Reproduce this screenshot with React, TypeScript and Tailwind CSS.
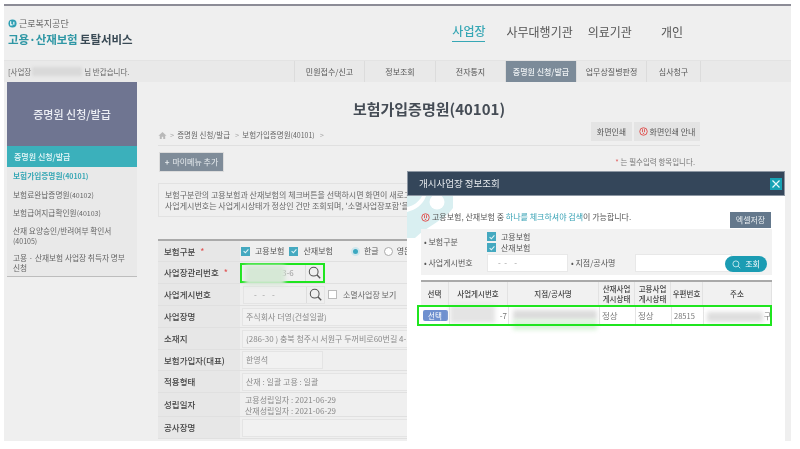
import React from "react";

function SearchIcon({ className = "" }: { className?: string }) {
  return (
    <svg viewBox="0 0 16 16" className={className} fill="none" stroke="#555" strokeWidth="1.3">
      <circle cx="7" cy="7" r="5.4" />
      <path d="M10.9 10.9 15 15" strokeWidth="1.7" />
    </svg>
  );
}

function AlertIcon({ className = "" }: { className?: string }) {
  return (
    <svg viewBox="0 0 12 12" className={className} fill="none">
      <circle cx="6" cy="6" r="5" stroke="#e0514f" strokeWidth="1.3" />
      <rect x="4.1" y="2.9" width="1.2" height="4" fill="#e0514f" />
      <rect x="6.7" y="2.9" width="1.2" height="4" fill="#e0514f" />
      <rect x="5.2" y="7.8" width="1.6" height="1.4" fill="#e0514f" />
    </svg>
  );
}

function Check({ className = "" }: { className?: string }) {
  return (
    <span className={`flex h-[9px] w-[9px] shrink-0 items-center justify-center bg-[#45a9c0] ${className}`}>
      <svg viewBox="0 0 10 10" className="h-[8px] w-[8px]" fill="none" stroke="#dff3f6" strokeWidth="1.4">
        <path d="M2 5.2 4.2 7.2 8 3" />
      </svg>
    </span>
  );
}

const tabs = [
  { t: "민원접수/신고", w: "w-[70px]" },
  { t: "정보조회", w: "w-[71px]" },
  { t: "전자통지", w: "w-[70px]" },
  { t: "증명원 신청/발급", w: "w-[71px]", active: true },
  { t: "업무상질병판정", w: "w-[70px]" },
  { t: "심사청구", w: "w-[54px]" },
];

function FormRow({ label, req, h, children }: { label: string; req?: boolean; h: string; children: React.ReactNode }) {
  return (
    <div className={`flex border-b border-[#e0e0e0] ${h}`}>
      <div className="flex w-[82px] shrink-0 items-center gap-[5px] bg-[#e7e7e7] pl-[6px] text-[8.5px] font-medium text-[#444]">
        <span>{label}</span>
        {req && <span className="text-[#e05a5a]">*</span>}
      </div>
      <div className="flex min-w-0 flex-1 items-center pl-[2px]">{children}</div>
    </div>
  );
}

function Val({ children, w = "w-full" }: { children?: React.ReactNode; w?: string }) {
  return (
    <div className={`flex h-[18px] items-center border border-[#e4e4e4] bg-[#f1f1f1] pl-[3px] text-[8px] text-[#8a8a8a] ${w}`}>
      {children}
    </div>
  );
}

const heads: { w: string; lines: string[] }[] = [
  { w: "w-[28px]", lines: ["선택"] },
  { w: "w-[59px]", lines: ["사업게시번호"] },
  { w: "w-[91px]", lines: ["지점/공사명"] },
  { w: "w-[36px]", lines: ["산재사업", "게시상태"] },
  { w: "w-[36px]", lines: ["고용사업", "게시상태"] },
  { w: "w-[32px]", lines: ["우편번호"] },
  { w: "w-[69px]", lines: ["주소"] },
];

function Code({ children }: { children: React.ReactNode }) {
  return <span className="text-[7px]">{children}</span>;
}

export default function App() {
  return (
    <div className="h-[449px] w-[800px] overflow-hidden bg-white pl-[4px] pt-[4px] font-['Noto_Sans_CJK_KR','Noto_Sans',sans-serif] blur-[0.45px]">
      <div className="relative h-[437px] w-[787px] overflow-hidden border-t-2 border-[#8c8c96] bg-[#efefef]">
        {/* header */}
        <div className="flex h-[54px] items-start justify-between">
          <div className="pl-[4px] pt-[12px]">
            <div className="flex items-center gap-[2px] text-[9px] leading-[11px] text-[#666]">
              <svg viewBox="0 0 10 10" className="h-[9px] w-[9px]">
                <circle cx="5" cy="5" r="4.5" fill="#2f9fb3" />
                <path d="M3 2.5v4h2M6.5 3v3.5" stroke="#fff" strokeWidth="1.2" fill="none" />
              </svg>
              근로복지공단
            </div>
            <div className="mt-[2px] text-[11.5px] font-bold leading-[16px] tracking-[-0.1px] text-[#3a4a55]">
              <span className="text-[#2f97a5]">고용·산재보험</span> 토탈서비스
            </div>
          </div>
          <div className="mr-[108px] mt-[16px] flex text-[12px] leading-[20px] text-[#555]">
            <span className="border-b border-[#37a7b5] font-medium leading-[18px] text-[#37a7b5]">사업장</span>
            <span className="ml-[21px] whitespace-nowrap">사무대행기관</span>
            <span className="ml-[15px] whitespace-nowrap">의료기관</span>
            <span className="ml-[29px] whitespace-nowrap">개인</span>
          </div>
        </div>

        {/* sub bar */}
        <div className="flex h-[22px] items-center border-t border-[#e3e3e3] bg-[#e9e9e9]">
          <div className="flex w-[290px] items-center pl-[4px] text-[7.5px] text-[#666]">
            <span>[사업장</span>
            <span className="mx-[1px] h-[9px] w-[50px] bg-[#d9d9d9] blur-[1.5px]" />
            <span className="ml-[1px]">님 반갑습니다.</span>
          </div>
          {tabs.map((x) => (
            <div
              key={x.t}
              className={`flex h-full items-center justify-center border-l border-[#dcdcdc] text-[8px] ${x.w} ${x.active ? "bg-[#7c8b99] font-medium text-[#eef2f4]" : "text-[#555]"}`}
            >
              {x.t}
            </div>
          ))}
          <div className="h-full border-l border-[#dcdcdc]" />
        </div>

        {/* body */}
        <div className="flex">
          <aside className="ml-[3px] h-[195px] w-[130px] border-b border-[#bdbdbd] bg-[#e9e9e9]">
            <div className="flex h-[64px] items-center justify-center bg-[#6f7591] text-[11px] font-medium text-[#eceef4]">
              증명원 신청/발급
            </div>
            <div className="flex h-[21px] items-center bg-[#3bb0bb] pl-[7px] text-[8px] font-medium text-[#eaf8f9]">
              증명원 신청/발급
            </div>
            <div className="px-[6px] text-[7.7px] leading-[10px] text-[#666]">
              <div className="flex h-[18px] items-baseline pt-[4px] font-bold text-[#37a7b5]">보험가입증명원<Code>(40101)</Code></div>
              <div className="flex h-[19px] items-baseline pt-[5px]">보험료완납증명원<Code>(40102)</Code></div>
              <div className="flex h-[18px] items-baseline pt-[4px]">보험급여지급확인원<Code>(40103)</Code></div>
              <div className="mt-[4px]">산재 요양승인/반려여부 확인서<br /><Code>(40105)</Code></div>
              <div className="mt-[7px]">고용 · 산재보험 사업장 취득자 명부<br />신청</div>
            </div>
          </aside>

          <main className="ml-[21px] w-[542px]">
            <h1 className="pt-[17px] text-center text-[15px] font-bold leading-[20px] text-[#454c55]">
              보험가입증명원(40101)
            </h1>
            <div className="mt-[3px] flex h-[24px] items-center justify-between border-b border-[#e0e0e0] pb-[4px]">
              <div className="flex items-center gap-[3px] pt-[7px] text-[7.5px] text-[#666]">
                <svg viewBox="0 0 10 10" className="h-[9px] w-[9px]"><path d="M5 1 .5 5.2H2V9h2.2V6.5h1.6V9H8V5.2h1.5z" fill="#b9b9b9" /></svg>
                <span className="text-[#aaa]">&gt;</span>
                <span>증명원 신청/발급</span>
                <span className="ml-[2px] text-[#aaa]">&gt;</span>
                <span>보험가입증명원<Code>(40101)</Code></span>
                <span className="ml-[2px] text-[#aaa]">&gt;</span>
              </div>
              <div className="flex gap-[2px] text-[8px] text-[#555]">
                <div className="flex h-[19px] w-[41px] items-center justify-center bg-[#e4e4e4]">화면인쇄</div>
                <div className="flex h-[19px] w-[66px] items-center justify-center gap-[2px] bg-[#e4e4e4]">
                  <AlertIcon className="h-[9px] w-[9px]" />
                  화면인쇄 안내
                </div>
              </div>
            </div>
            <div className="flex items-start justify-between pt-[6px]">
              <div className="ml-[1px] flex h-[20px] w-[65px] items-center justify-center gap-[3px] border border-[#dcdcdc] bg-[#7f8c99] text-[8px] text-[#e8edf0]">
                <span className="font-bold">+</span> 마이메뉴 추가
              </div>
              <div className="mr-[5px] mt-[5px] text-[7.5px] leading-[10px] text-[#777]">
                <span className="text-[#e05a5a]">*</span> 는 필수입력 항목입니다.
              </div>
            </div>
            <div className="mt-[11px] h-[34px] overflow-hidden whitespace-nowrap border border-[#e2e2e2] px-[6px] py-[5px] text-[8px] leading-[11px] text-[#666]">
              보험구분란의 고용보험과 산재보험의 체크버튼을 선택하시면 화면이 새로고침 됩니다.
              <br />
              사업게시번호는 사업게시상태가 정상인 건만 조회되며, &apos;소멸사업장포함&apos;을 체크하시면 모두 조회됩니다.
            </div>

            <div className="mt-[22px] border-t-2 border-[#aaa]">
              <FormRow label="보험구분" req h="h-[21px]">
                <div className="-ml-[1px] flex items-center text-[8px] text-[#555]">
                  <Check />
                  <span className="ml-[5px]">고용보험</span>
                  <Check className="ml-[5px]" />
                  <span className="ml-[5px]">산재보험</span>
                  <span className="ml-[18px] h-[9px] w-[9px] rounded-full border-[2px] border-[#cfe6ec] bg-[#3ba8c0]" />
                  <span className="ml-[4px]">한글</span>
                  <span className="ml-[5px] h-[9px] w-[9px] rounded-full border border-[#aaa] bg-white" />
                  <span className="ml-[4px]">영문</span>
                </div>
              </FormRow>
              <FormRow label="사업장관리번호" req h="h-[22px]">
                <div className="relative -ml-[2px] flex h-[20px] w-[85px] items-center justify-between border-2 border-[#1fe51f]">
                  <span className="pl-[40px] text-[8px] text-[#999]">3-6</span>
                  <span className="flex h-full w-[18px] items-center justify-center border-l border-[#ddd]">
                    <SearchIcon className="h-[13px] w-[13px]" />
                  </span>
                  <span className="absolute left-[3px] top-[0px] h-[20px] w-[40px] bg-[#d6e8d6] blur-[2px]" />
                </div>
              </FormRow>
              <FormRow label="사업게시번호" h="h-[22px]">
                <div className="ml-[1px] flex h-[18px] w-[82px] items-center justify-between border border-[#e4e4e4]">
                  <span className="pl-[10px] text-[8px] text-[#999]">-&nbsp;&nbsp;&nbsp;-&nbsp;&nbsp;&nbsp;&nbsp;-</span>
                  <span className="flex h-full w-[18px] items-center justify-center border-l border-[#ddd]">
                    <SearchIcon className="h-[13px] w-[13px]" />
                  </span>
                </div>
                <span className="ml-[3px] h-[9px] w-[9px] border border-[#bbb] bg-white" />
                <span className="ml-[6px] whitespace-nowrap text-[8px] text-[#666]">소멸사업장 보기</span>
              </FormRow>
              <FormRow label="사업장명" h="h-[22px]">
                <Val>주식회사 더영(건설일괄)</Val>
              </FormRow>
              <FormRow label="소재지" h="h-[22px]">
                <Val><span className="whitespace-nowrap">(286-30 ) 충북 청주시 서원구 두꺼비로60번길 4-11</span></Val>
              </FormRow>
              <FormRow label="보험가입자(대표)" h="h-[21px]">
                <Val w="w-[81px]">한영석</Val>
              </FormRow>
              <FormRow label="적용형태" h="h-[22px]">
                <Val>산재 : 일괄 고용 : 일괄</Val>
              </FormRow>
              <FormRow label="성립일자" h="h-[24px]">
                <div className="pl-[3px] text-[8px] leading-[11px] text-[#8a8a8a]">
                  고용성립일자 : 2021-06-29
                  <br />
                  산재성립일자 : 2021-06-29
                </div>
              </FormRow>
              <FormRow label="공사장명" h="h-[22px]">
                <Val />
              </FormRow>
            </div>
          </main>
        </div>

        {/* modal */}
        <div className="absolute left-[403px] top-[165px] h-[270px] w-[378px] bg-white">
          <div className="flex h-[25px] items-center justify-between border border-[#8d97a3] bg-[#34465a] pl-[11px] pr-[2px] text-[9.5px] text-[#e6eaee]">
            <span>개시사업장 정보조회</span>
            <span className="flex h-[12px] w-[12px] items-center justify-center bg-[#17a3b5]">
              <svg viewBox="0 0 10 10" className="h-[10px] w-[10px]" stroke="#e8fbfd" strokeWidth="1.2">
                <path d="M1.5 1.5l7 7M8.5 1.5l-7 7" />
              </svg>
            </span>
          </div>
          <svg viewBox="0 0 46 42" className="absolute left-0 top-[25px] h-[42px] w-[46px]">
            <path d="M0 0h46v12C38 24 20 30 8 42H0z" fill="#d9eff1" />
            <circle cx="30" cy="6" r="7.5" fill="#fff" />
            <path d="M0 16C8 14 16 9 19 0h-4C12 6 6 10 0 11z" fill="#fff" />
          </svg>
          <div className="relative px-[14px]">
            <div className="flex h-[33px] items-start justify-between pt-[16px]">
              <div className="flex items-center gap-[2px] text-[8px] leading-[10px] text-[#555]">
                <AlertIcon className="h-[9px] w-[9px]" />
                <span>고용보험, 산재보험 중 <span className="text-[#35a1b4]">하나를 체크하셔야 검색</span>이 가능합니다.</span>
              </div>
              <div className="flex h-[16px] w-[41px] items-center justify-center bg-[#64788c] text-[8px] text-[#e8edf0]">
                엑셀저장
              </div>
            </div>
            <div className="relative h-[46px] w-[351px] bg-[#f2f2f2] pl-[3px] pt-[3px] text-[8px] text-[#555]">
              <div className="flex h-[20px] items-center">
                <span className="w-[63px]">• 보험구분</span>
                <div className="flex flex-col gap-[2px]">
                  <div className="flex items-center gap-[5px] leading-[9px]"><Check />고용보험</div>
                  <div className="flex items-center gap-[5px] leading-[9px]"><Check />산재보험</div>
                </div>
              </div>
              <div className="mt-[2px] flex h-[18px] items-center">
                <span className="w-[63px]">• 사업게시번호</span>
                <div className="flex h-[18px] w-[81px] items-center border border-[#e8e8e8] bg-white pl-[10px] text-[#999]">
                  -&nbsp;&nbsp;-&nbsp;&nbsp;&nbsp;&nbsp;-
                </div>
                <span className="ml-[3px] w-[64px] whitespace-nowrap">• 지점/공사명</span>
                <div className="h-[18px] w-[97px] border border-[#e8e8e8] bg-white" />
              </div>
              <div className="absolute left-[304px] top-[27px] flex h-[16px] w-[42px] items-center justify-center gap-[4px] rounded-full bg-[#1b9cb3] text-[8px] text-white">
                <svg viewBox="0 0 12 12" className="h-[9px] w-[9px]" fill="none" stroke="#d6f2f6" strokeWidth="1.1">
                  <circle cx="5.2" cy="5.2" r="4" />
                  <path d="M8.2 8.2 11 11" />
                </svg>
                조회
              </div>
            </div>

            <div className="mt-[5px] w-[351px] border-t-2 border-[#a9a9a9]">
              <div className="flex h-[24px] bg-[#f1f1f1] text-[7.5px] font-medium leading-[10px] text-[#444]">
                {heads.map((h) => (
                  <div key={h.w + h.lines[0]} className={`flex flex-col items-center justify-center border-r border-[#e2e2e2] ${h.w}`}>
                    {h.lines.map((l) => (
                      <span key={l} className="whitespace-nowrap">{l}</span>
                    ))}
                  </div>
                ))}
              </div>
              <div className="flex h-[19px] items-center text-[8px] text-[#777]">
                <div className="flex w-[28px] justify-center">
                  <span className="flex h-[11px] w-[25px] items-center justify-center rounded-[2px] bg-[#6f90cf] text-[7.5px] text-white">선택</span>
                </div>
                <div className="flex h-full w-[59px] items-center justify-end border-l border-[#e4e4e4] pr-[1px]">-7</div>
                <div className="h-full w-[91px] border-l border-[#e4e4e4]" />
                <div className="flex h-full w-[36px] items-center border-l border-[#e4e4e4] pl-[2px] text-[8.5px]">정상</div>
                <div className="flex h-full w-[36px] items-center border-l border-[#e4e4e4] pl-[2px] text-[8.5px]">정상</div>
                <div className="flex h-full w-[32px] items-center border-l border-[#e4e4e4] pl-[2px] text-[7.5px]">28515</div>
                <div className="flex h-full w-[69px] items-center justify-end border-l border-[#e4e4e4] pr-[1px]">구</div>
              </div>
            </div>
            {/* mosaics and highlight over the row */}
            <span className="absolute left-[43px] top-[109px] h-[18px] w-[45px] bg-[#e4e4e4] blur-[2px]" />
            <span className="absolute left-[106px] top-[114px] h-[10px] w-[84px] bg-[#dcdcdc] blur-[2px]" />
            <span className="absolute left-[106px] top-[124px] h-[10px] w-[84px] bg-[#d9f2d9] blur-[2px]" />
            <span className="absolute left-[300px] top-[116px] h-[10px] w-[56px] bg-[#dedede] blur-[2px]" />
            <div className="absolute left-[10px] top-[109px] h-[21px] w-[355px] border-2 border-[#1fe51f]" />
          </div>
        </div>
      </div>
    </div>
  );
}
